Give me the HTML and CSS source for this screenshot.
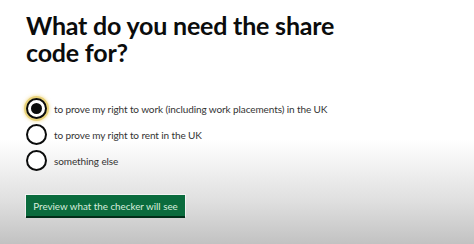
FILE: index.html
```html
<!DOCTYPE html>
<html lang="en">
<head>
  <meta charset="UTF-8">
  <meta name="viewport" content="width=device-width, initial-scale=1.0">
  <title>Share code</title>
  <link rel="stylesheet" href="styles.css">
</head>
<body>

  <main class="page">
    <h1 class="heading">What do you need the share<br>code for?</h1>

    <form class="reason-form">
      <div class="radios">
        <label class="radio-item focused">
          <input type="radio" name="reason" value="work" checked>
          <span class="radio-mark"></span>
          <span class="radio-label">to prove my right to work (including work placements) in the UK</span>
        </label>
        <label class="radio-item">
          <input type="radio" name="reason" value="rent">
          <span class="radio-mark"></span>
          <span class="radio-label">to prove my right to rent in the UK</span>
        </label>
        <label class="radio-item">
          <input type="radio" name="reason" value="other">
          <span class="radio-mark"></span>
          <span class="radio-label">something else</span>
        </label>
      </div>

      <button type="submit" class="preview-button">Preview what the checker will see</button>
    </form>
  </main>

</body>
</html>
```

FILE: styles.css
```css
html, body {
  margin: 0;
  height: 100%;
}
body {
  font-family: Lato, "Liberation Sans", Arial, sans-serif;
  color: #0b0c0c;
  background: linear-gradient(to bottom, #ffffff 0px, #ffffff 140px, #e0e0e0 200px, #c2c2c2 244px);
  overflow: hidden;
}
.page {
  padding: 12px 0 0 26px;
}
.heading {
  margin: 0;
  font-size: 25px;
  line-height: 27px;
  font-weight: 700;
  letter-spacing: -0.2px;
}
.reason-form {
  margin-top: 32px;
}
.radios {
  display: flex;
  flex-direction: column;
  gap: 5px;
}
.radio-item {
  display: flex;
  align-items: center;
  gap: 7px;
  height: 21px;
  cursor: pointer;
}
.radio-item input {
  display: none;
}
.radio-mark {
  width: 17px;
  height: 17px;
  border: 2px solid #0b0c0c;
  border-radius: 50%;
  background: #fff;
  position: relative;
  flex-shrink: 0;
}
.radio-item input:checked + .radio-mark::after {
  content: "";
  position: absolute;
  top: 3px;
  left: 3px;
  width: 11px;
  height: 11px;
  border-radius: 50%;
  background: #0b0c0c;
}
.focused .radio-mark {
  box-shadow: 0 0 0 2px #e8d27a, 0 0 3px 3px rgba(240, 210, 110, 0.5);
}
.radio-label {
  font-size: 10px;
  letter-spacing: -0.1px;
  color: #333;
}
.preview-button {
  margin-top: 24px;
  width: 159px;
  height: 21px;
  padding: 0;
  border: none;
  background-color: #0a6b3d;
  box-shadow: 0 2px 0 #002d18, 0 0 0 1px rgba(255, 255, 255, 0.6);
  color: #d8eedd;
  font-family: Lato, "Liberation Sans", Arial, sans-serif;
  font-size: 9.8px;
  cursor: pointer;
}
```
